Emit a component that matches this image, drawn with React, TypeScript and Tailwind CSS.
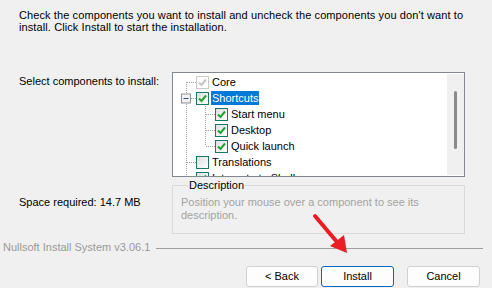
import * as React from 'react'

type Item = {
  label: string;
  level: number;
  state: 'checked' | 'unchecked' | 'disabled';
  selected?: boolean;
};

const items: Item[] = [
  { label: 'Core', level: 0, state: 'disabled' },
  { label: 'Shortcuts', level: 0, state: 'checked', selected: true },
  { label: 'Start menu', level: 1, state: 'checked' },
  { label: 'Desktop', level: 1, state: 'checked' },
  { label: 'Quick launch', level: 1, state: 'checked' },
  { label: 'Translations', level: 0, state: 'unchecked' },
  { label: 'Integrate to Shell', level: 0, state: 'checked' },
];

function CheckBox({ state }: { state: Item['state'] }) {
  const disabled = state === 'disabled';
  return (
    <div
      className={
        disabled
          ? 'w-[13px] h-[13px] shrink-0 border border-[#c9c9c9] bg-white flex items-center justify-center'
          : 'w-[13px] h-[13px] shrink-0 border border-[#1d7668] bg-gradient-to-br from-[#dedede] to-white flex items-center justify-center'
      }
    >
      {state !== 'unchecked' && (
        <svg width="11" height="11" viewBox="0 0 11 11">
          <path
            d="M2 5.5 L4.5 8 L9 2.5"
            fill="none"
            stroke={disabled ? '#c6c6c6' : '#21a232'}
            strokeWidth="2"
          />
        </svg>
      )}
    </div>
  );
}

function TreeLines() {
  // dotted connector lines and the collapse box
  return (
    <svg className="absolute left-0 top-0 pointer-events-none" width="60" height="110">
      <g stroke="#a0a0a0" strokeWidth="1" strokeDasharray="1 1" fill="none">
        <line x1="13.5" y1="9" x2="13.5" y2="110" />
        <line x1="14" y1="9.5" x2="23" y2="9.5" />
        <line x1="18" y1="25.5" x2="23" y2="25.5" />
        <line x1="14" y1="89.5" x2="23" y2="89.5" />
        <line x1="14" y1="105.5" x2="23" y2="105.5" />
        <line x1="32.5" y1="33" x2="32.5" y2="73" />
        <line x1="33" y1="41.5" x2="42" y2="41.5" />
        <line x1="33" y1="57.5" x2="42" y2="57.5" />
        <line x1="33" y1="73.5" x2="42" y2="73.5" />
      </g>
      <rect x="8.5" y="21" width="9" height="9" fill="#f2f2f2" stroke="#8e9196" />
      <line x1="10.5" y1="25.5" x2="15.5" y2="25.5" stroke="#2f4a7c" strokeWidth="1" />
    </svg>
  );
}

export default function App() {
  return (
    <div className="w-[492px] h-[288px] bg-[#f0f0f0] overflow-hidden relative text-[11px] text-black font-['Liberation_Sans',Arial,sans-serif]">
      <p className="pl-[19px] pt-[9px] leading-[12px] whitespace-nowrap tracking-[0.1px]">
        Check the components you want to install and uncheck the components you don't want to
        <br />
        install. Click Install to start the installation.
      </p>

      <div className="flex mt-[39px]">
        <div className="w-[172px] pl-[19px] pt-[1px] leading-[16px] whitespace-nowrap">Select components to install:</div>
        <div className="w-[293px] h-[105px] border border-[#828790] bg-white flex">
          <div className="flex-1 relative overflow-hidden pt-[1px]">
            <TreeLines />
            {items.map((it) => (
              <div
                key={it.label}
                className={
                  it.level === 0
                    ? 'h-[16px] flex items-center pl-[23px] relative'
                    : 'h-[16px] flex items-center pl-[42px] relative'
                }
              >
                <CheckBox state={it.state} />
                <span
                  className={
                    it.selected
                      ? 'ml-[2px] px-[1px] h-[14px] leading-[14px] bg-[#0078d7] text-white whitespace-nowrap'
                      : 'ml-[2px] px-[1px] h-[14px] leading-[14px] whitespace-nowrap'
                  }
                >
                  {it.label}
                </span>
              </div>
            ))}
          </div>
          <div className="w-[17px] bg-[#f0f0f0] my-[1px] pl-[7px] pt-[17px]">
            <div className="w-[3px] h-[58px] rounded-full bg-[#8a8a8a]" />
          </div>
        </div>
      </div>

      <div className="flex mt-[1px]">
        <div className="w-[172px] pl-[19px] pt-[16px] leading-[16px] whitespace-nowrap">Space required: 14.7 MB</div>
        <fieldset className="w-[293px] h-[56px] border border-[#dadada] pl-[8px] pr-[4px]">
          <legend className="ml-[7px] px-[1px] leading-[14px]">Description</legend>
          <p className="pt-[4px] leading-[13px] text-[#a3a3a3] whitespace-nowrap">
            Position your mouse over a component to see its
            <br />
            description.
          </p>
        </fieldset>
      </div>

      <div className="flex items-center mt-[6px] pl-[3px] pr-[9px]">
        <span className="text-[#9a9a9a] leading-[14px] whitespace-nowrap">Nullsoft Install System v3.06.1</span>
        <div className="flex-1 h-px bg-[#a0a0a0] ml-[6px] mt-[3px]" />
      </div>

      <div className="flex justify-end pr-[12px] mt-[12px]">
        <button className="w-[72px] h-[21px] rounded-[3px] border border-[#d0d0d0] bg-[#fdfdfd] leading-[19px]">
          &lt; Back
        </button>
        <button className="w-[73px] h-[21px] ml-[3px] rounded-[3px] border border-[#0067c0] bg-[#fdfdfd] leading-[19px]">
          Install
        </button>
        <button className="w-[73px] h-[21px] ml-[13px] rounded-[3px] border border-[#d0d0d0] bg-[#fdfdfd] leading-[19px]">
          Cancel
        </button>
      </div>

      <svg className="absolute left-0 top-0 pointer-events-none" width="492" height="288">
        <line x1="315" y1="216" x2="337" y2="242" stroke="#ea1c24" strokeWidth="4" strokeLinecap="round" />
        <polygon points="347,253 330,246 344,235" fill="#ea1c24" />
      </svg>
    </div>
  );
}
